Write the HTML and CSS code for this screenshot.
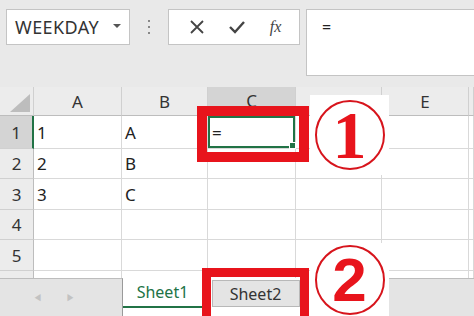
FILE: index.html
```html
<!DOCTYPE html>
<html lang="ja">

<head>
  <meta charset="UTF-8">
  <title>WEEKDAY</title>
  <link rel="stylesheet" href="styles.css">
</head>

<body>

  <div class="toolbar">
    <div class="namebox">
      <span>WEEKDAY</span>
      <span class="caret"></span>
    </div>
    <div class="dots"><i></i><i></i><i></i></div>
    <div class="fxbuttons">
      <svg width="16" height="16" viewBox="0 0 16 16"><path d="M2 2L14 14M14 2L2 14" stroke="#444" stroke-width="1.8" fill="none"/></svg>
      <svg width="18" height="16" viewBox="0 0 18 16"><path d="M2 8L7 13L16 3" stroke="#444" stroke-width="2.4" fill="none"/></svg>
      <span class="fx">fx</span>
    </div>
    <div class="formula">=</div>
  </div>

  <div class="sheet">
    <div class="hd corner"><span class="tri"></span></div>
    <div class="hd">A</div>
    <div class="hd">B</div>
    <div class="hd sel">C</div>
    <div class="hd"></div>
    <div class="hd">E</div>
    <div class="hd"></div>

    <div class="rh sel">1</div>
    <div class="c">1</div>
    <div class="c">A</div>
    <div class="c active">=<span class="handle"></span></div>
    <div class="c"></div>
    <div class="c"></div>
    <div class="c"></div>

    <div class="rh">2</div>
    <div class="c">2</div>
    <div class="c">B</div>
    <div class="c"></div>
    <div class="c"></div>
    <div class="c"></div>
    <div class="c"></div>

    <div class="rh">3</div>
    <div class="c">3</div>
    <div class="c">C</div>
    <div class="c"></div>
    <div class="c"></div>
    <div class="c"></div>
    <div class="c"></div>

    <div class="rh">4</div>
    <div class="c"></div>
    <div class="c"></div>
    <div class="c"></div>
    <div class="c"></div>
    <div class="c"></div>
    <div class="c"></div>

    <div class="rh">5</div>
    <div class="c"></div>
    <div class="c"></div>
    <div class="c"></div>
    <div class="c"></div>
    <div class="c"></div>
    <div class="c"></div>

    <div class="rh"></div>
    <div class="c"></div>
    <div class="c"></div>
    <div class="c"></div>
    <div class="c"></div>
    <div class="c"></div>
    <div class="c"></div>
  </div>

  <div class="tabbar">
    <div class="nav"><span>&#9664;</span><span>&#9654;</span></div>
    <div class="tab current">Sheet1</div>
    <div class="tab other"><span>Sheet2</span></div>
    <div class="tabgap"></div>
    <div class="tabrest"></div>
  </div>

  <!-- annotations drawn over the screenshot -->
  <div class="mark mark-cell"></div>
  <div class="mark mark-tab"></div>
  <div class="badge badge-1"><span>1</span></div>
  <div class="badge badge-2"><span>2</span></div>

</body>

</html>
```

FILE: styles.css
```css
body {
  margin: 0;
  width: 474px;
  height: 316px;
  overflow: hidden;
  position: relative;
  background-color: #e9e9e9;
  font-family: "Noto Sans", "Open Sans", sans-serif;
  color: #222;
}

/* top bar */
.toolbar {
  height: 87px;
  box-sizing: border-box;
  padding: 9px 0 0 6px;
  display: flex;
  align-items: flex-start;
}

.namebox {
  width: 124px;
  height: 36px;
  box-sizing: border-box;
  background-color: #fff;
  border: 1px solid #c4c4c4;
  display: flex;
  align-items: center;
  justify-content: space-between;
  padding: 0 8px 0 8px;
  font-size: 18px;
  letter-spacing: 0.4px;
  color: #333;
}

.caret {
  width: 0;
  height: 0;
  border-left: 4px solid transparent;
  border-right: 4px solid transparent;
  border-top: 4px solid #555;
  margin-top: -3px;
}

.dots {
  width: 38px;
  height: 36px;
  display: flex;
  flex-direction: column;
  align-items: center;
  justify-content: center;
  gap: 4px;
}

.dots i {
  width: 2px;
  height: 2px;
  background-color: #888;
}

.fxbuttons {
  width: 132px;
  height: 36px;
  box-sizing: border-box;
  background-color: #fff;
  border: 1px solid #c4c4c4;
  display: flex;
  align-items: center;
  justify-content: space-around;
  padding: 0 6px 0 8px;
}

.fx {
  font-family: "Liberation Serif", serif;
  font-style: italic;
  font-size: 16px;
  color: #444;
}

.formula {
  flex: 1;
  height: 67px;
  margin-left: 6px;
  box-sizing: border-box;
  background-color: #fff;
  border: 1px solid #c4c4c4;
  border-right: none;
  padding: 6px 0 0 15px;
  font-size: 16px;
}

/* grid */
.sheet {
  display: grid;
  grid-template-columns: 34px 88px 86px 88px 86px 87px 1fr;
  grid-template-rows: 29px 33px 30px 31px 30px 31px 20px;
  height: 191px;
  overflow: hidden;
  background-color: #fff;
}

.hd {
  background-color: #ececec;
  border-right: 1px solid #d0d0d0;
  border-bottom: 1px solid #bdbdbd;
  display: flex;
  align-items: center;
  justify-content: center;
  font-size: 17px;
  color: #333;
}

.hd.sel {
  background-color: #d4d4d4;
  border-bottom: 2px solid #217346;
}

.corner {
  position: relative;
}

.tri {
  position: absolute;
  right: 3px;
  bottom: 3px;
  width: 0;
  height: 0;
  border-left: 20px solid transparent;
  border-bottom: 18px solid #bdbdbd;
}

.rh {
  background-color: #ececec;
  border-right: 1px solid #bdbdbd;
  border-bottom: 1px solid #d0d0d0;
  display: flex;
  align-items: center;
  justify-content: center;
  font-size: 17px;
  color: #333;
}

.rh.sel {
  background-color: #d4d4d4;
  border-right: 2px solid #217346;
}

.c {
  border-right: 1px solid #d9d9d9;
  border-bottom: 1px solid #d9d9d9;
  display: flex;
  align-items: center;
  padding-left: 3px;
  font-size: 17px;
}

.c.active {
  position: relative;
  box-shadow: inset 0 0 0 2px #217346;
  padding-left: 4px;
}

.handle {
  position: absolute;
  right: -1px;
  bottom: -1px;
  width: 5px;
  height: 5px;
  background-color: #217346;
  border: 1px solid #fff;
}

/* sheet tabs */
.tabbar {
  display: flex;
  height: 38px;
  background-color: #fff;
}

.nav {
  width: 123px;
  box-sizing: border-box;
  background-color: #e4e4e4;
  border-top: 1px solid #bdbdbd;
  border-right: 1px solid #9a9a9a;
  display: flex;
  align-items: center;
  justify-content: center;
  gap: 24px;
  padding-right: 14px;
  font-size: 9px;
  color: #c2c2c2;
}

.tab {
  box-sizing: border-box;
  font-size: 16px;
  display: flex;
  align-items: center;
  justify-content: center;
}

.tab.current {
  width: 79px;
  height: 30px;
  color: #217346;
  border-bottom: 2px solid #217346;
}

.tab.other {
  width: 107px;
  align-items: flex-start;
  padding-top: 2px;
}

.tab.other span {
  width: 88px;
  height: 27px;
  box-sizing: border-box;
  background-color: #e4e4e4;
  border: 1px solid #b8b8b8;
  display: flex;
  align-items: center;
  justify-content: center;
  color: #333;
}

.tabgap {
  width: 79px;
}

.tabrest {
  flex: 1;
  background-color: #e4e4e4;
  border-top: 1px solid #bdbdbd;
}

/* red annotations */
.mark {
  position: absolute;
  box-sizing: border-box;
  border: 10px solid #e8141c;
}

.mark-cell {
  left: 197px;
  top: 106px;
  width: 112px;
  height: 56px;
}

.mark-tab {
  left: 202px;
  top: 268px;
  width: 107px;
  height: 58px;
  border-width: 9px;
}

.badge {
  position: absolute;
  left: 310px;
  width: 79px;
  background-color: #fff;
  display: flex;
  align-items: center;
  justify-content: center;
}

.badge span {
  width: 66px;
  height: 66px;
  border: 2.5px solid #d7141c;
  border-radius: 50%;
  display: flex;
  align-items: center;
  justify-content: center;
  font-family: "Liberation Serif", serif;
  font-weight: bold;
  font-size: 68px;
  line-height: 1;
  color: #e8141c;
}

.badge-1 {
  top: 95px;
  height: 80px;
}

.badge-2 {
  top: 243px;
  height: 76px;
  box-sizing: border-box;
  align-items: flex-start;
  padding-top: 2px;
}

.badge-2 span {
  font-family: "Liberation Sans", sans-serif;
  font-size: 62px;
}
```
